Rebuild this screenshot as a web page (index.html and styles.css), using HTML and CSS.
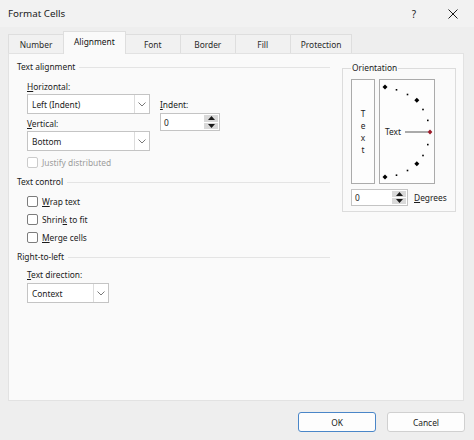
FILE: index.html
```html
<!DOCTYPE html>
<html>
<head>
<meta charset="utf-8">
<link rel="stylesheet" href="styles.css">
</head>
<body>
<div class="dialog">
  <div class="titlebar">
    <span class="title">Format Cells</span>
    <span class="help">?</span>
    <svg class="close" width="10" height="10" viewBox="0 0 10 10"><path d="M0.5 0.5 L9.5 9.5 M9.5 0.5 L0.5 9.5" stroke="#1a1a1a" stroke-width="1"/></svg>
  </div>
  <div class="tabs">
    <div class="tab">Number</div>
    <div class="tab active">Alignment</div>
    <div class="tab">Font</div>
    <div class="tab">Border</div>
    <div class="tab">Fill</div>
    <div class="tab">Protection</div>
  </div>
  <div class="panel">
    <div class="leftcol">
      <div class="group-head"><span>Text alignment</span></div>
      <div class="ta-body">
        <div class="col-a">
          <div class="lbl"><u>H</u>orizontal:</div>
          <div class="select wide"><span class="val">Left (Indent)</span><span class="drop"><svg width="8" height="5" viewBox="0 0 8 5"><path d="M0.5 0.5 L4 4 L7.5 0.5" fill="none" stroke="#6a6a6a" stroke-width="0.9"/></svg></span></div>
          <div class="lbl lbl-gap"><u>V</u>ertical:</div>
          <div class="select wide"><span class="val">Bottom</span><span class="drop"><svg width="8" height="5" viewBox="0 0 8 5"><path d="M0.5 0.5 L4 4 L7.5 0.5" fill="none" stroke="#6a6a6a" stroke-width="0.9"/></svg></span></div>
        </div>
        <div class="col-b">
          <div class="lbl"><u>I</u>ndent:</div>
          <div class="spin indent"><span class="val">0</span><span class="spinbtns"><span class="sb"><svg width="7" height="4" viewBox="0 0 7 4"><path d="M3.5 0 L7 4 L0 4 Z" fill="#1a1a1a"/></svg></span><span class="sb"><svg width="7" height="4" viewBox="0 0 7 4"><path d="M0 0 L7 0 L3.5 4 Z" fill="#1a1a1a"/></svg></span></span></div>
        </div>
      </div>
      <div class="check disabled"><span class="box"></span><span>Justify distributed</span></div>
      <div class="group-head gh2"><span>Text control</span></div>
      <div class="checks">
        <div class="check"><span class="box"></span><span><u>W</u>rap text</span></div>
        <div class="check"><span class="box"></span><span>Shrin<u>k</u> to fit</span></div>
        <div class="check"><span class="box"></span><span><u>M</u>erge cells</span></div>
      </div>
      <div class="group-head gh3"><span>Right-to-left</span></div>
      <div class="lbl indent-lbl"><u>T</u>ext direction:</div>
      <div class="select small"><span class="val">Context</span><span class="drop"><svg width="8" height="5" viewBox="0 0 8 5"><path d="M0.5 0.5 L4 4 L7.5 0.5" fill="none" stroke="#6a6a6a" stroke-width="0.9"/></svg></span></div>
    </div>
    <fieldset class="orient">
      <legend>Orientation</legend>
      <div class="orient-boxes">
        <div class="vbox"><span>T</span><span>e</span><span>x</span><span>t</span></div>
        <div class="arcbox">
          <svg width="54" height="103" viewBox="1 1 54 103">
            <g fill="#000">
              <rect x="16.7" y="10" width="1.6" height="1.6"/>
              <rect x="27.7" y="14.7" width="1.6" height="1.6"/>
              <rect x="43.2" y="29.7" width="1.6" height="1.6"/>
              <rect x="48" y="40.6" width="1.6" height="1.6"/>
              <rect x="48" y="64.8" width="1.6" height="1.6"/>
              <rect x="43.2" y="75.7" width="1.6" height="1.6"/>
              <rect x="27.7" y="90.7" width="1.6" height="1.6"/>
              <rect x="16.7" y="95.4" width="1.6" height="1.6"/>
              <path d="M6 5.5 L8.5 8 L6 10.5 L3.5 8 Z"/>
              <path d="M37.8 18.7 L40.3 21.2 L37.8 23.7 L35.3 21.2 Z"/>
              <path d="M37.8 82.3 L40.3 84.8 L37.8 87.3 L35.3 84.8 Z"/>
              <path d="M6 95.5 L8.5 98 L6 100.5 L3.5 98 Z"/>
            </g>
            <line x1="26" y1="53" x2="49" y2="53" stroke="#7d7d7d" stroke-width="1.3"/>
            <path d="M51 50.6 L53.4 53 L51 55.4 L48.6 53 Z" fill="#9b1c2a"/>
            <text x="6" y="56" class="arc-text">Text</text>
          </svg>
        </div>
      </div>
      <div class="deg-row">
        <div class="spin deg"><span class="val">0</span><span class="spinbtns"><span class="sb"><svg width="7" height="4" viewBox="0 0 7 4"><path d="M3.5 0 L7 4 L0 4 Z" fill="#1a1a1a"/></svg></span><span class="sb"><svg width="7" height="4" viewBox="0 0 7 4"><path d="M0 0 L7 0 L3.5 4 Z" fill="#1a1a1a"/></svg></span></span></div>
        <span class="deg-lbl"><u>D</u>egrees</span>
      </div>
    </fieldset>
  </div>
  <div class="footer">
    <button class="btn ok">OK</button>
    <button class="btn">Cancel</button>
  </div>
</div>
</body>
</html>
```
FILE: styles.css
```css
html, body {
  margin: 0;
  padding: 0;
}
body {
  width: 474px;
  height: 440px;
  background: #eeeeee;
  font-family: "Noto Sans", sans-serif;
  font-size: 8.4px;
  color: #1b1b1b;
  overflow: hidden;
}
.dialog {
  width: 474px;
  height: 440px;
  position: relative;
}
.titlebar {
  height: 27px;
  display: flex;
  align-items: center;
  padding-left: 8px;
  background: #f2f2f2;
}
.title {
  font-size: 9.8px;
  flex: 1;
}
.help {
  font-size: 10px;
  margin-right: 32px;
}
.close {
  margin-right: 16px;
}
.tabs {
  height: 26px;
  display: flex;
  align-items: flex-end;
  padding-left: 8px;
  box-sizing: border-box;
}
.tab {
  height: 19px;
  min-width: 56px;
  padding: 0 10px;
  box-sizing: border-box;
  display: flex;
  align-items: center;
  justify-content: center;
  border: 1px solid #dedede;
  border-bottom: none;
  margin-right: -1px;
  background: #f1f1f1;
  color: #2a2a2a;
}
.tab.active {
  height: 23px;
  background: #fafafa;
  margin-bottom: -1px;
  position: relative;
  z-index: 1;
  padding-bottom: 3px;
  color: #111;
}
.panel {
  margin-left: 8px;
  width: 456px;
  height: 348px;
  box-sizing: border-box;
  background: #fafafa;
  border: 1px solid #e2e2e2;
  padding: 6px 0 0 8px;
  display: flex;
  align-items: flex-start;
}
.leftcol {
  width: 325px;
  flex: none;
}
.group-head {
  height: 14px;
  line-height: 14px;
  display: flex;
  align-items: center;
  gap: 4px;
  margin-right: 12px;
}
.group-head::after {
  content: "";
  flex: 1;
  height: 1px;
  background: #e4e4e4;
}
.gh2 { margin-top: 6px; }
.gh3 { margin-top: 4px; }
.lbl {
  height: 14px;
  line-height: 14px;
}
.lbl-gap { margin-top: 3px; }
.ta-body {
  display: flex;
  margin-top: 6px;
  padding-left: 10px;
}
.col-b {
  margin-left: 10px;
  padding-top: 18px;
}
.select {
  height: 20px;
  box-sizing: border-box;
  border: 1px solid #c4c4c4;
  background: #ffffff;
  display: flex;
  align-items: center;
}
.select.wide { width: 123px; }
.select.small { width: 82px; margin-left: 10px; margin-top: 1px; }
.select .val {
  flex: 1;
  padding-left: 4px;
}
.select .drop {
  width: 14px;
  height: 100%;
  border-left: 1px solid #dcdcdc;
  display: flex;
  align-items: center;
  justify-content: center;
}
.spin {
  box-sizing: border-box;
  border: 1px solid #c4c4c4;
  background: #ffffff;
  display: flex;
}
.spin.indent {
  width: 60px;
  height: 18px;
  margin-top: 1px;
}
.spin.deg {
  width: 57px;
  height: 17px;
}
.spin .val {
  flex: 1;
  padding-left: 3px;
  display: flex;
  align-items: center;
}
.spinbtns {
  width: 14px;
  display: flex;
  flex-direction: column;
  gap: 1px;
  padding: 1px;
  background: #ffffff;
}
.sb {
  flex: 1;
  background: #d9d9d9;
  display: flex;
  align-items: center;
  justify-content: center;
}
.check {
  display: flex;
  align-items: center;
  gap: 4px;
  padding-left: 10px;
  height: 18px;
}
.check .box {
  width: 9px;
  height: 9px;
  border: 1px solid #7c7c7c;
  border-radius: 2px;
  background: #ffffff;
}
.check.disabled {
  height: 14px;
  margin-top: 4px;
  color: #9d9d9d;
}
.check.disabled .box {
  border-color: #cbcbcb;
}
.checks { margin-top: 3px; }
.indent-lbl {
  margin-top: 4px;
  padding-left: 10px;
}
.orient {
  margin: 1px 0 0 0;
  width: 114px;
  height: 151px;
  box-sizing: border-box;
  border: 1px solid #dcdcdc;
  padding: 4px 0 0 8px;
  min-width: 0;
}
.orient legend {
  padding: 0 1px;
  margin-left: 0;
  line-height: 14px;
}
.orient-boxes {
  display: flex;
  gap: 4px;
}
.vbox {
  width: 24px;
  height: 105px;
  box-sizing: border-box;
  border: 1px solid #ababab;
  background: #fdfdfd;
  display: flex;
  flex-direction: column;
  align-items: center;
  justify-content: center;
  line-height: 12px;
}
.arcbox {
  width: 56px;
  height: 105px;
  box-sizing: border-box;
  border: 1px solid #ababab;
  background: #fdfdfd;
}
.arcbox svg { display: block; }
.arc-text {
  font-family: "Noto Sans", sans-serif;
  font-size: 8.4px;
  fill: #1b1b1b;
}
.deg-row {
  display: flex;
  align-items: center;
  margin-top: 5px;
  gap: 6px;
}
.footer {
  display: flex;
  justify-content: flex-end;
  gap: 11px;
  padding: 11px 9px 0 0;
}
.btn {
  width: 78px;
  height: 20px;
  box-sizing: border-box;
  border: 1px solid #d0d0d0;
  border-radius: 3px;
  background: #fdfdfd;
  font-family: "Noto Sans", sans-serif;
  font-size: 8.4px;
  color: #1b1b1b;
  padding: 0;
}
.btn.ok {
  border-color: #4a86c8;
}
```
